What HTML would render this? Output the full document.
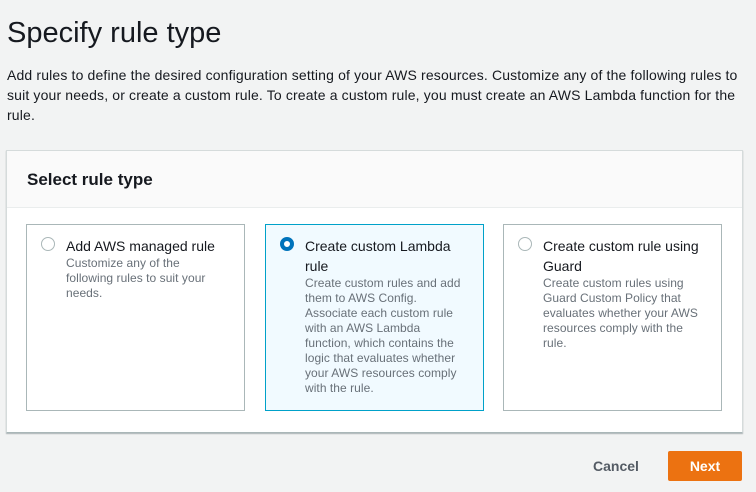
<!DOCTYPE html>
<html><head><style>
body{margin:0;width:756px;height:492px;background:#f2f3f3;font-family:"Liberation Sans",Arial,sans-serif;color:#16191f;position:relative;overflow:hidden}
h1{position:absolute;left:7px;top:14px;margin:0;font-size:29px;font-weight:normal;line-height:38px}
p.d{position:absolute;left:7px;top:65px;width:738px;margin:0;font-size:14px;line-height:20px;letter-spacing:0.15px}
.panel{position:absolute;left:6px;top:150px;width:735px;height:281px;background:#fff;border:1px solid #d5dbdb;border-bottom-color:#aab7b8;box-shadow:0 1px 1px rgba(0,28,36,.3)}
.hdr{height:56px;background:#fafafa;border-bottom:1px solid #eaeded;font-size:17px;font-weight:bold;padding-left:20px;line-height:58px}
.card{position:absolute;top:73px;width:219px;height:187px;border:1px solid #aab7b8;background:#fff;box-sizing:border-box}
.card.sel{border-color:#00a1c9;background:#f1faff}
.r{position:absolute;left:14px;top:12px;width:14px;height:14px;border:1px solid #aab7b8;border-radius:50%;box-sizing:border-box;background:#fff}
.sel .r{border:4px solid #0073bb}
.t{position:absolute;left:39px;top:11px;width:165px;font-size:14px;line-height:20px}
.s{font-size:12px;line-height:15px;color:#687078;display:block;width:160px;letter-spacing:0.05px}
.cancel{position:absolute;left:593px;top:458px;font-size:14px;font-weight:bold;color:#545b64}
.next{position:absolute;left:668px;top:451px;width:74px;height:30px;background:#ec7211;border-radius:2px;color:#fff;font-weight:bold;font-size:14px;text-align:center;line-height:30px}
</style></head><body>
<h1>Specify rule type</h1>
<p class="d">Add rules to define the desired configuration setting of your AWS resources. Customize any of the following rules to suit your needs, or create a custom rule. To create a custom rule, you must create an AWS Lambda function for the rule.</p>
<div class="panel">
<div class="hdr">Select rule type</div>
<div class="card" style="left:19px"><div class="r"></div><div class="t">Add AWS managed rule<span class="s">Customize any of the<br>following rules to suit your needs.</span></div></div>
<div class="card sel" style="left:258px"><div class="r"></div><div class="t">Create custom Lambda rule<span class="s">Create custom rules and add them to AWS Config. Associate each custom rule with an AWS Lambda function, which contains the logic that evaluates whether your AWS resources comply with the rule.</span></div></div>
<div class="card" style="left:496px"><div class="r"></div><div class="t">Create custom rule using Guard<span class="s">Create custom rules using Guard Custom Policy that evaluates whether your AWS resources comply with the rule.</span></div></div>
</div>
<div class="cancel">Cancel</div>
<div class="next">Next</div>
</body></html>
